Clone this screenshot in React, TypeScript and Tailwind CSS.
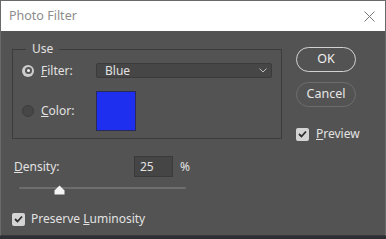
import React from "react";

const font = { fontFamily: '"Noto Sans", "Open Sans", sans-serif' };

function Check() {
    return (
        <div className="w-[13px] h-[13px] rounded-[2px] bg-[#d4d4d4] flex items-center justify-center shrink-0">
            <svg width="9" height="8" viewBox="0 0 9 8">
                <polyline points="1,4 3.5,6.5 8,1.5" fill="none" stroke="#2e2e2e" strokeWidth="1.8" />
            </svg>
        </div>
    );
}

export default function App() {
    return (
        <div className="w-[386px] h-[239px] bg-[#2c2f34] overflow-hidden" style={font}>
            <div className="w-[386px] h-[236px] bg-[#535353] border border-[#6a6a6a] border-b-[#383838] flex flex-col">
                {/* Title bar */}
                <div className="h-[30px] bg-white flex items-center justify-between pl-[8px] pr-[10px] shrink-0">
                    <span className="text-[12.5px] text-[#8c8c8c]">Photo Filter</span>
                    <svg width="11" height="11" viewBox="0 0 11 11">
                        <line x1="0.5" y1="0.5" x2="10.5" y2="10.5" stroke="#777" strokeWidth="1" />
                        <line x1="10.5" y1="0.5" x2="0.5" y2="10.5" stroke="#777" strokeWidth="1" />
                    </svg>
                </div>

                <div className="flex items-start text-[12px] text-[#e2e2e2]">
                    {/* Left column */}
                    <div className="ml-[11px] mt-[10px] w-[270px]">
                        <fieldset className="border border-[#3c3c3c] h-[98px] px-[9px]">
                            <legend className="ml-[4px] px-[6px] leading-[16px]">Use</legend>
                            <div className="flex items-center h-[15px] mt-[6px]">
                                <div className="w-[12px] h-[12px] rounded-full bg-[#cdcdcd] flex items-center justify-center">
                                    <div className="w-[7px] h-[7px] rounded-full bg-[#555] flex items-center justify-center">
                                        <div className="w-[3px] h-[3px] rounded-full bg-[#f2f2f2]" />
                                    </div>
                                </div>
                                <span className="ml-[7px] w-[55px]"><span className="underline">F</span>ilter:</span>
                                <div className="w-[176px] h-[15px] bg-[#464646] border border-[#3b3b3b] rounded-[2px] flex items-center justify-between pl-[8px] pr-[4px]">
                                    <span className="leading-none">Blue</span>
                                    <svg width="8" height="5" viewBox="0 0 8 5">
                                        <polyline points="0.5,0.5 4,4 7.5,0.5" fill="none" stroke="#bdbdbd" strokeWidth="1" />
                                    </svg>
                                </div>
                            </div>
                            <div className="flex items-center mt-[13px]">
                                <div className="w-[12px] h-[12px] rounded-full bg-[#474747] border border-[#3d3d3d]" />
                                <span className="ml-[7px] w-[55px]"><span className="underline">C</span>olor:</span>
                                <div className="w-[40px] h-[40px] bg-[#1e2ff0] border border-[#2a2a5a]" />
                            </div>
                        </fieldset>

                        <div className="flex items-center mt-[17px]">
                            <span className="ml-[2px] w-[120px]"><span className="underline">D</span>ensity:</span>
                            <div className="w-[39px] h-[21px] bg-[#454545] border border-[#3a3a3a] flex items-center pl-[5px]">25</div>
                            <span className="ml-[7px]">%</span>
                        </div>

                        <div className="relative ml-[7px] w-[167px] h-[10px] mt-[8px]">
                            <div className="absolute left-0 right-0 top-[2px] h-[2px] bg-[#6e6e6e] rounded-full" />
                            <svg className="absolute left-[35px] top-0" width="11" height="10" viewBox="0 0 11 10">
                                <polygon points="5.5,0.5 10.5,5.5 10.5,9.5 0.5,9.5 0.5,5.5" fill="#f4f4f4" />
                            </svg>
                        </div>

                        <div className="flex items-center mt-[15px]">
                            <Check />
                            <span className="ml-[6px]">Preserve <span className="underline">L</span>uminosity</span>
                        </div>
                    </div>

                    {/* Right column */}
                    <div className="ml-[14px] mt-[16px] w-[60px] flex flex-col">
                        <button className="h-[25px] rounded-full border-[1.5px] border-[#d2d2d2] text-[#f0f0f0] text-[12.5px] flex items-center justify-center">OK</button>
                        <button className="h-[25px] mt-[10px] rounded-full border-[1.5px] border-[#6d6d6d] text-[#e6e6e6] text-[12.5px] flex items-center justify-center">Cancel</button>
                        <div className="flex items-center mt-[18px]">
                            <Check />
                            <span className="ml-[7px]"><span className="underline">P</span>review</span>
                        </div>
                    </div>
                </div>
            </div>
        </div>
    );
}
